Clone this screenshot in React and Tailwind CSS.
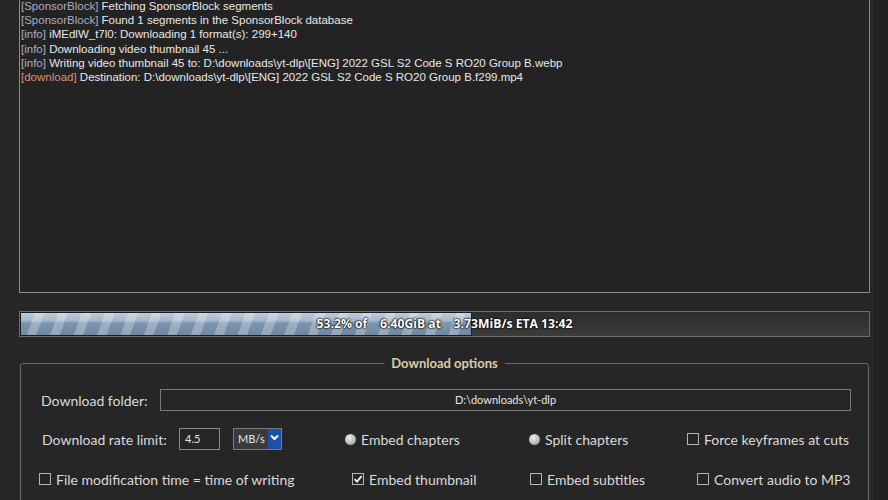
import React from 'react';

const LOG = [
  { tag: '[SponsorBlock]', kind: 'sb', text: ' Fetching SponsorBlock segments' },
  { tag: '[SponsorBlock]', kind: 'sb', text: ' Found 1 segments in the SponsorBlock database' },
  { tag: '[info]', kind: 'info', text: ' iMEdlW_t7l0: Downloading 1 format(s): 299+140' },
  { tag: '[info]', kind: 'info', text: ' Downloading video thumbnail 45 ...' },
  { tag: '[info]', kind: 'info', text: ' Writing video thumbnail 45 to: D:\\downloads\\yt-dlp\\[ENG] 2022 GSL S2 Code S RO20 Group B.webp' },
  { tag: '[download]', kind: 'dl', text: ' Destination: D:\\downloads\\yt-dlp\\[ENG] 2022 GSL S2 Code S RO20 Group B.f299.mp4' },
];

function CheckBox({ checked }) {
  return (
    <span className="w-[12px] h-[12px] border border-[#b4b4b4] bg-[#262626] flex items-center justify-center shrink-0">
      {checked && (
        <svg width="10" height="10" viewBox="0 0 10 10">
          <path d="M1.5 5.2 L4 7.6 L8.6 2.2" fill="none" stroke="#f0f0f0" strokeWidth="1.8" />
        </svg>
      )}
    </span>
  );
}

function Radio() {
  return (
    <span className="w-[11px] h-[11px] rounded-full shrink-0 bg-[radial-gradient(circle_at_40%_35%,#f0f0f0,#b8b8b8_55%,#8a8a8a)]" />
  );
}

function Option({ type, checked, label, width }) {
  return (
    <div className={`flex items-center gap-[5px] ${width || ''}`}>
      {type === 'radio' ? <Radio /> : <CheckBox checked={checked} />}
      <span>{label}</span>
    </div>
  );
}

export default function App() {
  return (
    <div className="w-[888px] h-[500px] bg-[#262626] overflow-hidden relative font-['Lato','Noto_Sans',sans-serif]">
      <div className="absolute right-0 top-0 bottom-0 w-[16px] bg-[#222] border-l border-[#2e2e2e]" />

      {/* log */}
      <div className="ml-[19px] w-[851px] h-[294px] bg-[#232323] border-x border-b border-[#8c8c8c] pl-[1px] font-['Liberation_Sans',Arial,sans-serif] text-[11.5px] leading-[14.2px] text-[#e8e8e8]">
        <div className="-mt-[1px]">
          {LOG.map((l, i) => (
            <div key={i} className="whitespace-pre">
              <span className={l.kind === 'dl' ? 'text-[#d88f7c]' : 'text-[#a9adc2]'}>{l.tag}</span>
              {l.text}
            </div>
          ))}
        </div>
      </div>

      {/* progress */}
      <div className="ml-[19px] mt-[18px] w-[851px] h-[26px] relative border border-[#6e6e6e] bg-[linear-gradient(#2c2c2c,#3c3c3c)]">
        <div className="absolute left-0 top-0 bottom-0 w-[53.2%] border border-[#1c1c1c] bg-[linear-gradient(#bccddd_0%,#a3b8cc_35%,#7d95ae_45%,#6f879f_100%)]">
          <div className="w-full h-full bg-[repeating-linear-gradient(110deg,transparent_0px,transparent_13px,rgba(255,255,255,0.26)_13px,rgba(255,255,255,0.26)_22px)]" />
        </div>
        <div className="absolute inset-0 flex items-center justify-center font-['Open_Sans',sans-serif] font-bold text-[12.2px] text-white whitespace-pre [text-shadow:0_0_2px_#000,0_0_2px_#000,0_0_1px_#000]">
          {'53.2% of    6.40GiB at    3.73MiB/s ETA 13:42'}
        </div>
      </div>

      {/* options */}
      <fieldset className="ml-[20px] mt-[18px] w-[849px] h-[160px] border border-[#6a6a6a] rounded-[3px] text-[14px] text-[#dadada]">
        <legend className="mx-auto px-[7px] font-bold text-[13px] text-[#dccca8] leading-[16px]">Download options</legend>

        <div className="flex items-center h-[22px] mt-[18px] pl-[20px]">
          <span className="w-[119px]">Download folder:</span>
          <div className="w-[691px] h-[22px] border border-[#7a7a7a] bg-[#262626] flex items-center justify-center text-[11px] text-[#e4e4e4]">
            D:\downloads\yt-dlp
          </div>
        </div>

        <div className="flex items-center h-[22px] mt-[17px] pl-[21px]">
          <span className="w-[137px]">Download rate limit:</span>
          <div className="w-[41px] h-[22px] border border-[#8a8a8a] bg-[#262626] flex items-center pl-[5px] text-[11px] text-[#e4e4e4]">4.5</div>
          <div className="ml-[13px] w-[49px] h-[22px] border border-[#7a7a7a] bg-[#3a3a3a] flex text-[11px] text-[#e4e4e4]">
            <span className="flex-1 flex items-center pl-[4px]">MB/s</span>
            <span className="w-[13px] bg-[#1d4fa6] flex items-start justify-center pt-[5px]">
              <svg width="9" height="7" viewBox="0 0 9 7">
                <path d="M1 1.5 L4.5 5 L8 1.5" fill="none" stroke="#fff" strokeWidth="2" />
              </svg>
            </span>
          </div>
          <div className="ml-[63px] w-[184px]"><Option type="radio" label="Embed chapters" /></div>
          <div className="w-[158px]"><Option type="radio" label="Split chapters" /></div>
          <Option type="check" label="Force keyframes at cuts" />
        </div>

        <div className="flex items-center h-[22px] mt-[18px] pl-[18px]">
          <Option type="check" label="File modification time = time of writing" width="w-[313px]" />
          <Option type="check" checked label="Embed thumbnail" width="w-[178px]" />
          <Option type="check" label="Embed subtitles" width="w-[167px]" />
          <Option type="check" label="Convert audio to MP3" />
        </div>
      </fieldset>
    </div>
  );
}
